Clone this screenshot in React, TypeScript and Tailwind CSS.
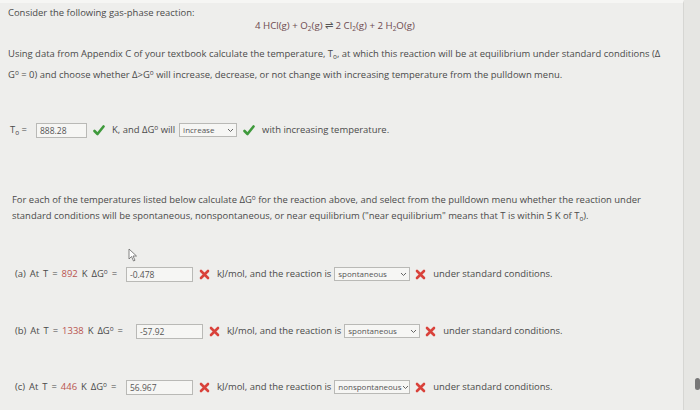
import React from "react";

const font = { fontFamily: '"Open Sans", "Liberation Sans", Arial, sans-serif' };

function Check() {
  return (
    <svg width="12" height="11" viewBox="0 0 12 11" className="shrink-0">
      <path d="M1.5 6 L4.5 9 L10.5 1.5" fill="none" stroke="#3f9a3c" strokeWidth="2.6" strokeLinecap="round" strokeLinejoin="round" />
    </svg>
  );
}

function Cross() {
  return (
    <svg width="11" height="11" viewBox="0 0 11 11" className="shrink-0">
      <path d="M2 2 L9 9 M9 2 L2 9" fill="none" stroke="#d9423b" strokeWidth="2.6" strokeLinecap="round" />
    </svg>
  );
}

function Box({ value, w }: { value: string; w: string }) {
  return (
    <div className={`${w} h-[15px] shrink-0 border border-[#b9b9b6] bg-[#f6f6f4] text-[8.5px] leading-[13px] pl-[3px] text-[#555]`}>
      {value}
    </div>
  );
}

function Pick({ value, w }: { value: string; w: string }) {
  return (
    <div className={`${w} h-[14px] shrink-0 border border-[#b9b9b6] bg-[#f6f6f4] text-[8px] leading-[12px] pl-[3px] pr-[2px] text-[#555] flex items-center justify-between`}>
      <span>{value}</span>
      <svg width="7" height="5" viewBox="0 0 7 5" className="shrink-0">
        <path d="M1 1 L3.5 3.5 L6 1" fill="none" stroke="#666" strokeWidth="1" />
      </svg>
    </div>
  );
}

const G0 = (
  <>
    ΔG<sup className="text-[6.5px]">o</sup>
  </>
);

function Row({ label, temp, dg, tW, reaction }: {
  label: string; temp: string; dg: string; tW: string; reaction: string;
}) {
  return (
    <div className="flex items-center h-4 text-[9.45px] text-[#4a4a4a] pl-[15px] whitespace-nowrap">
      <span className={`${tW} shrink-0 [word-spacing:1.5px]`}>
        ({label}) At T = <span className="text-[#b9544f]">{temp}</span> K {G0} =
      </span>
      <Box value={dg} w="w-[67px]" />
      <span className="ml-[6px]"><Cross /></span>
      <span className="ml-[7px] mr-[3px]">kJ/mol, and the reaction is</span>
      <Pick value={reaction} w="w-[76px]" />
      <span className="ml-[5px]"><Cross /></span>
      <span className="ml-[7px]">under standard conditions.</span>
    </div>
  );
}

export default function App() {
  return (
    <div style={font} className="relative w-[700px] h-[410px] bg-[#eeeeec] flex overflow-hidden">
      <div className="w-[684px] h-full border-r border-[#d6d6d3] border-t-[3px] border-t-[#f6f6f4] text-[#4a4a4a] whitespace-nowrap">
        <div className="pl-[8px] mt-[3px] text-[9.45px] leading-[14px]">Consider the following gas-phase reaction:</div>
        <div className="pl-[255px] -mt-[1px] text-[9.7px] leading-[14px] text-[#6d4a4f]">
          4 HCl(g) + O<sub className="text-[6.5px]">2</sub>(g) <span className="text-[#555]">⇌</span> 2 Cl<sub className="text-[6.5px]">2</sub>(g) + 2 H<sub className="text-[6.5px]">2</sub>O(g)
        </div>
        <div className="pl-[8px] mt-[10px] text-[9.45px] leading-[21px]">
          Using data from Appendix C of your textbook calculate the temperature, T<sub className="text-[6.5px]">o</sub>, at which this reaction will be at equilibrium under standard conditions (Δ
          <br />
          G<sup className="text-[6.5px]">o</sup> = 0) and choose whether Δ&gt;G<sup className="text-[6.5px]">o</sup> will increase, decrease, or not change with increasing temperature from the pulldown menu.
        </div>
        <div className="flex items-center h-4 mt-[37px] pl-[10px] text-[9.45px]">
          <span className="w-[26px] shrink-0">T<sub className="text-[6.5px]">o</sub> =</span>
          <Box value="888.28" w="w-[51px]" />
          <span className="ml-[6px]"><Check /></span>
          <span className="ml-[7px] mr-[4px]">K, and {G0} will</span>
          <Pick value="increase" w="w-[58px]" />
          <span className="ml-[6px]"><Check /></span>
          <span className="ml-[7px]">with increasing temperature.</span>
        </div>
        <div className="pl-[12px] mt-[54px] text-[9.45px] leading-[16px]">
          For each of the temperatures listed below calculate {G0} for the reaction above, and select from the pulldown menu whether the reaction under
          <br />
          standard conditions will be spontaneous, nonspontaneous, or near equilibrium ("near equilibrium" means that T is within 5 K of T<sub className="text-[6.5px]">o</sub>).
        </div>
        <div className="mt-[42px]">
          <Row label="a" temp="892" dg="-0.478" tW="w-[111px]" reaction="spontaneous" />
        </div>
        <div className="mt-[41px]">
          <Row label="b" temp="1338" dg="-57.92" tW="w-[121px]" reaction="spontaneous" />
        </div>
        <div className="mt-[40px]">
          <Row label="c" temp="446" dg="56.967" tW="w-[111px]" reaction="nonspontaneous" />
        </div>
      </div>
      <div className="flex-1 bg-[#e6e6e3] flex flex-col justify-end items-end pb-[20px]">
        <div className="w-[5px] h-[12px] bg-[#777] rounded-sm" />
      </div>
      <svg className="absolute left-[128px] top-[248px]" width="10" height="14" viewBox="0 0 10 14">
        <path d="M1 1 L1 11 L3.5 8.5 L5.5 13 L7 12.3 L5 8 L8.5 8 Z" fill="#fff" stroke="#666" strokeWidth="0.8" />
      </svg>
    </div>
  );
}
